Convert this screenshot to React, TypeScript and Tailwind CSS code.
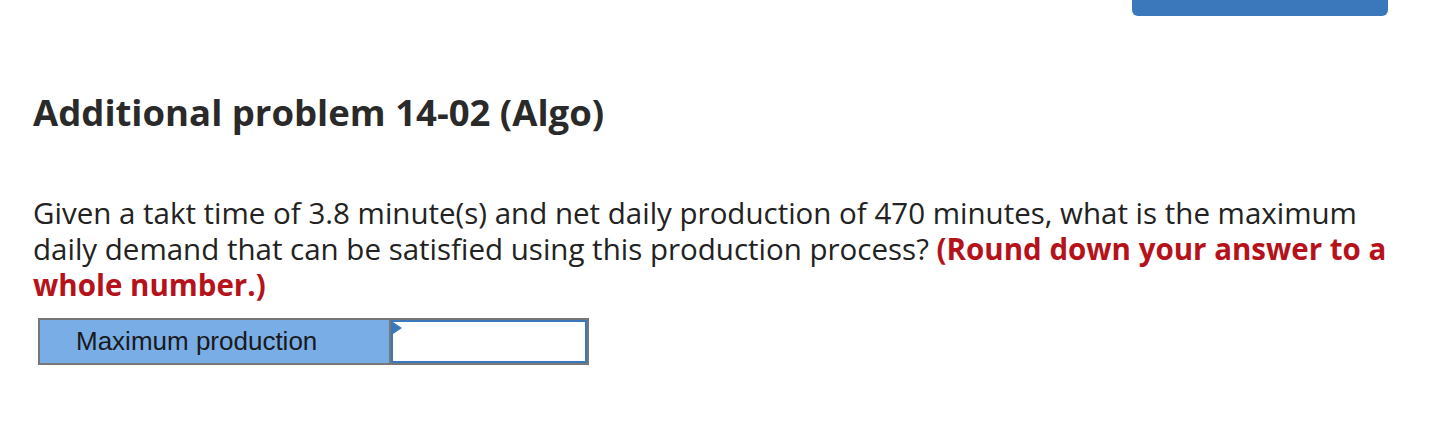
export default function App() {
  return (
    <div className="relative h-[444px] w-[1450px] overflow-hidden bg-white font-['Open_Sans',sans-serif]">
      {/* top button stub */}
      <div className="absolute left-[1132px] top-0 h-4 w-[256px] rounded-b-md bg-[#3a77bb]" />

      <main className="px-[33px] pt-[90px]">
        <h1 className="text-[36.5px] font-bold leading-[44px] text-[#2a2a2a]">
          Additional problem 14-02 (Algo)
        </h1>

        <p className="mt-[61px] w-[1390px] text-[29.5px] leading-[36px] text-[#222]">
          Given a takt time of 3.8 minute(s) and net daily production of 470 minutes, what is the maximum
          <br />
          daily demand that can be satisfied using this production process?{" "}
          <span className="font-bold text-[#b5121b]">(Round down your answer to a whole number.)</span>
        </p>

        <div className="ml-[5px] mt-[15px] flex h-[47px] w-[551px] border-2 border-[#777]">
          <div className="flex w-[349px] items-center bg-[#79ade5] pl-[36px] font-['Liberation_Sans',sans-serif] text-[26px] text-[#1a1a1a]">
            Maximum production
          </div>
          <div className="w-[2px] bg-[#777]" />
          <div className="relative flex-1 border-2 border-[#3a77bb] bg-white">
            <div className="absolute left-0 top-0 h-0 w-0 border-y-[6px] border-l-[9px] border-y-transparent border-l-[#3a77bb]" />
          </div>
        </div>
      </main>
    </div>
  );
}
